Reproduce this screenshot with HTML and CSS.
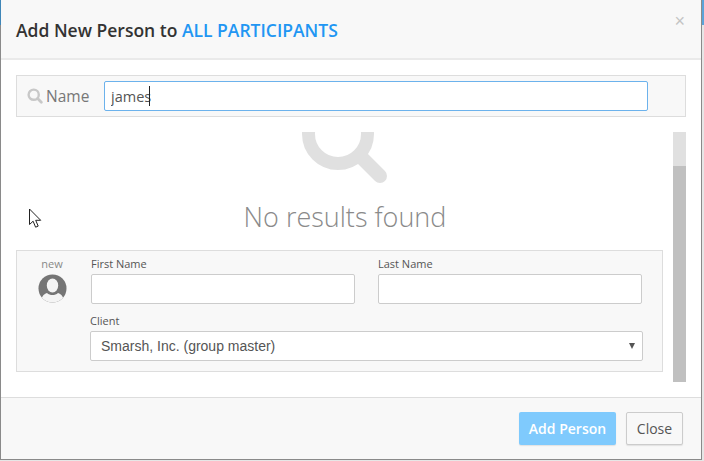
FILE: index.html
```html
<!DOCTYPE html>
<html lang="en">
<head>
<meta charset="utf-8">
<title>Add New Person</title>
<link rel="stylesheet" href="styles.css">
</head>
<body>
<span class="backdrop-blue backdrop-blue-left"></span>
<span class="backdrop-blue backdrop-blue-right"></span>
<div class="modal">
  <header class="modal-header">
    <h1 class="modal-title">Add New Person to <span class="accent">ALL PARTICIPANTS</span></h1>
    <span class="close-x">×</span>
  </header>
  <main class="modal-body">
    <div class="search-bar">
      <svg class="search-icon" width="16" height="16" viewBox="0 0 16 16"><circle cx="6.700" cy="6.700" r="5.100" fill="none" stroke="#c8c8c8" stroke-width="2.400"/><path d="M10.600 10.600l3.700 3.700" stroke="#c8c8c8" stroke-width="2.800" stroke-linecap="round"/></svg>
      <span class="search-label">Name</span>
      <div class="search-field"><input class="search-input" type="text" value="james"><span class="caret"></span></div>
    </div>
    <div class="results">
      <div class="results-content">
        <svg class="big-icon" width="90" height="52" viewBox="0 0 90 52"><circle cx="36" cy="2" r="29.500" fill="none" stroke="#e0e0e0" stroke-width="13"/><path d="M60 26l18 18" stroke="#e0e0e0" stroke-width="14" stroke-linecap="round"/></svg>
        <p class="no-results">No results found</p>
        <section class="new-person">
          <div class="avatar-col">
            <span class="new-tag">new</span>
            <svg class="avatar" width="29" height="29" viewBox="0 0 29 29"><defs><clipPath id="av"><circle cx="14.500" cy="14.500" r="14"/></clipPath></defs><circle cx="14.500" cy="14.500" r="14" fill="#757575"/><g clip-path="url(#av)" fill="#f4f4f4"><ellipse cx="14.500" cy="11.500" rx="5.700" ry="7"/><path d="M3 29c0-6 2.500-9 6-10 1.500 1.500 3.500 2 5.500 2s4-.5 5.500-2c3.500 1 6 4 6 10z"/></g></svg>
          </div>
          <div class="fields">
            <div class="name-row">
              <label class="field"><span class="field-label">First Name</span><input class="text-input" type="text"></label>
              <label class="field"><span class="field-label">Last Name</span><input class="text-input" type="text"></label>
            </div>
            <div class="client-field">
              <span class="field-label">Client</span>
              <div class="select-box"><span>Smarsh, Inc. (group master)</span><span class="select-arrow"></span></div>
            </div>
          </div>
        </section>
      </div>
      <div class="scrollbar"><div class="scroll-thumb"></div></div>
    </div>
  </main>
  <footer class="modal-footer">
    <button class="btn btn-primary" type="button">Add Person</button>
    <button class="btn btn-default" type="button">Close</button>
  </footer>
</div>
<svg class="cursor" width="14" height="21" viewBox="0 0 14 21"><path d="M1.500 1v15.500l3.600-3.300 2.500 6 2.600-1.100-2.500-5.800h5z" fill="#fff" stroke="#222" stroke-width="1"/></svg>
</body>
</html>
```
FILE: styles.css
```css
* { box-sizing: border-box; }
html, body { margin: 0; padding: 0; height: 461px; overflow: hidden; }
body {
  background: #e6e6e6;
  font-family: "Open Sans", "Liberation Sans", sans-serif;
  color: #333;
  position: relative;
}
.backdrop-blue { position: absolute; top: 0; height: 25px; background: #3f86b8; }
.backdrop-blue-left { left: 0; width: 1px; }
.backdrop-blue-right { left: 702px; width: 2px; background: #5ba3d9; }
.modal {
  width: 702px;
  height: 460px;
  display: flex;
  flex-direction: column;
  background: #fff;
  border-left: 1px solid #8a8a8a;
  border-right: 1px solid #8a8a8a;
  border-bottom: 1px solid #8a8a8a;
}
.modal-header {
  height: 60px;
  flex: none;
  display: flex;
  align-items: flex-start;
  justify-content: space-between;
  padding: 0 16px 0 15px;
  background: #f8f8f8;
  border-bottom: 2px solid #eaeaea;
}
.modal-title {
  margin: 18px 0 0;
  font-size: 17.500px;
  line-height: 24px;
  font-weight: 600;
  color: #333;
}
.accent { color: #2196f3; }
.close-x {
  margin: 9px 0 0;
  font-size: 18px;
  line-height: 24px;
  color: #c4c4c4;
  font-family: "Liberation Sans", sans-serif;
}
.modal-body {
  flex: 1;
  display: flex;
  flex-direction: column;
  padding: 15px 15px 0;
  min-height: 0;
}
.search-bar {
  height: 42px;
  flex: none;
  display: flex;
  align-items: center;
  padding: 0 37px 0 10px;
  background: #f8f8f8;
  border: 1px solid #ddd;
}
.search-icon { flex: none; margin-right: 3px; }
.search-label { width: 58px; flex: none; font-size: 15.500px; color: #777; }
.search-field { flex: 1; position: relative; }
.search-input {
  display: block;
  width: 100%;
  height: 30px;
  padding: 0 6px;
  border: 1px solid #6cb2ec;
  border-radius: 2px;
  background: #fff;
  font: 14.500px "Open Sans", sans-serif;
  color: #555;
  outline: none;
}
.caret { position: absolute; left: 45px; top: 5px; width: 1px; height: 20px; background: #222; }
.results {
  height: 250px;
  flex: none;
  margin-top: 15px;
  display: flex;
  justify-content: space-between;
  overflow: hidden;
}
.results-content { width: 647px; display: flex; flex-direction: column; }
.big-icon { flex: none; margin-left: 286px; display: block; }
.no-results {
  margin: 17px 0 0;
  text-align: center;
  font-size: 27px;
  line-height: 32px;
  font-weight: 300;
  color: #8a8a8a;
  padding-left: 11px;
}
.new-person {
  margin-top: 17px;
  height: 122px;
  flex: none;
  display: flex;
  background: #f8f8f8;
  border: 1px solid #ddd;
}
.avatar-col { width: 73px; flex: none; display: flex; flex-direction: column; align-items: center; padding: 6px 3px 0 0; }
.new-tag { font-size: 11px; line-height: 14px; color: #888; }
.avatar { display: block; margin-top: 3px; }
.fields { flex: 1; padding-top: 5px; padding-right: 19px; display: flex; flex-direction: column; }
.name-row { display: flex; gap: 23px; padding-left: 1px; padding-right: 1px; }
.field { width: 264px; display: flex; flex-direction: column; }
.field-label { font-size: 11px; line-height: 15px; color: #555; display: block; }
.text-input {
  height: 30px;
  margin-top: 3px;
  border: 1px solid #ccc;
  border-radius: 2px;
  background: #fff;
}
.client-field { margin-top: 9px; }
.select-box {
  height: 30px;
  margin-top: 3px;
  padding: 0 7px 0 10px;
  display: flex;
  align-items: center;
  justify-content: space-between;
  background: #fff;
  border: 1px solid #ccc;
  border-radius: 2px;
  font: 14px "Liberation Sans", Arial, sans-serif;
  color: #555;
}
.select-arrow { width: 0; height: 0; border-left: 3px solid transparent; border-right: 3px solid transparent; border-top: 6px solid #555; }
.scrollbar { width: 13px; flex: none; background: #e0e0e0; padding-top: 34px; }
.scroll-thumb { height: 216px; background: #c0c0c0; }
.modal-footer {
  height: 62px;
  flex: none;
  display: flex;
  justify-content: flex-end;
  align-items: flex-start;
  gap: 10px;
  padding: 14px 18px 0 0;
  background: #f8f8f8;
  border-top: 1px solid #ddd;
}
.btn {
  height: 33px;
  border-radius: 2px;
  font-family: "Open Sans", sans-serif;
  font-size: 14px;
  padding: 0;
}
.btn-primary { width: 97px; background: #7fcafd; border: 0; color: #fff; font-weight: 600; box-shadow: 0 1px 1px #e2e2e2; }
.btn-default { width: 57px; background: #f8f8f8; border: 1px solid #ccc; color: #555; box-shadow: 0 1px 1px #e2e2e2; }
.cursor { position: absolute; left: 28px; top: 208px; }
```
